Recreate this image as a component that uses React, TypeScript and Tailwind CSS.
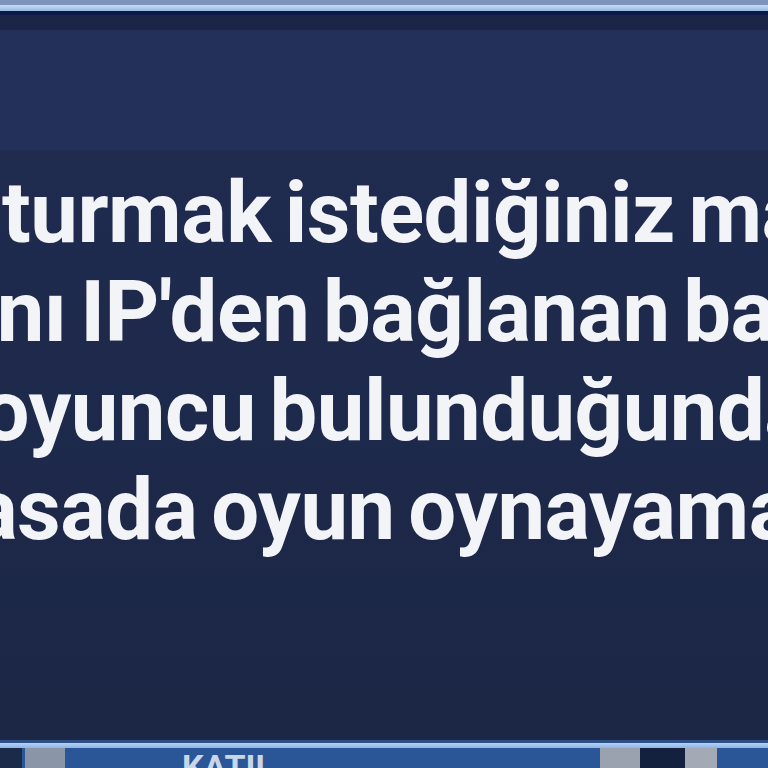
export default function App() {
  const lines = [
    { text: "Oturmak istediğiniz masada", ml: "ml-[-56px]" },
    { text: "aynı IP'den bağlanan başka", ml: "ml-[-90px]" },
    { text: "bir oyuncu bulunduğundan bu", ml: "ml-[-132px]" },
    { text: "masada oyun oynayamazsınız.", ml: "ml-[-101px]" },
  ];

  return (
    <div className="flex h-[768px] w-[768px] flex-col overflow-hidden bg-[#1e2a4d] font-['Roboto',sans-serif]">
      {/* top chrome */}
      <div className="h-[5px] shrink-0 bg-[#7d93b9]" />
      <div className="h-[6px] shrink-0 bg-gradient-to-b from-[#c5dcf7] to-[#9ab9e4]" />
      <div className="h-[4px] shrink-0 bg-[#0b1a46]" />
      <div className="h-[15px] shrink-0 bg-[#1a2547]" />

      {/* header panel */}
      <div className="h-[120px] shrink-0 bg-[#23305a]" />

      {/* message */}
      <div className="flex flex-1 flex-col overflow-hidden bg-gradient-to-b from-[#1f2b4f] to-[#1c2746] pt-[14px]">
        {lines.map((l) => (
          <div
            key={l.text}
            className={`${l.ml} whitespace-nowrap text-[85px] font-bold leading-[99px] tracking-[-0.5px] [word-spacing:-7px] text-[#f3f4f7]`}
          >
            {l.text}
          </div>
        ))}
      </div>

      {/* bottom chrome */}
      <div className="h-[3px] shrink-0 bg-[#2c4f86]" />
      <div className="h-[5px] shrink-0 bg-gradient-to-b from-[#b6d2f5] to-[#8fb3e3]" />
      <div className="relative h-[20px] shrink-0 overflow-hidden bg-[#2a5597]">
        <div className="absolute left-[25px] top-0 h-full w-[40px] bg-[#8a95a8]" />
        <div className="absolute left-[0px] top-0 h-full w-[22px] bg-[#1a2a48]" />
        <div className="absolute left-[600px] top-0 h-full w-[40px] bg-[#9aa2b0]" />
        <div className="absolute left-[640px] top-0 h-full w-[45px] bg-[#14213e]" />
        <div className="absolute left-[685px] top-0 h-full w-[32px] bg-[#a3aab6]" />
        <div className="absolute left-[182px] top-[2px] text-[34px] font-bold leading-[34px] text-[#c9d6e8]">
          KATIL
        </div>
      </div>
    </div>
  );
}
